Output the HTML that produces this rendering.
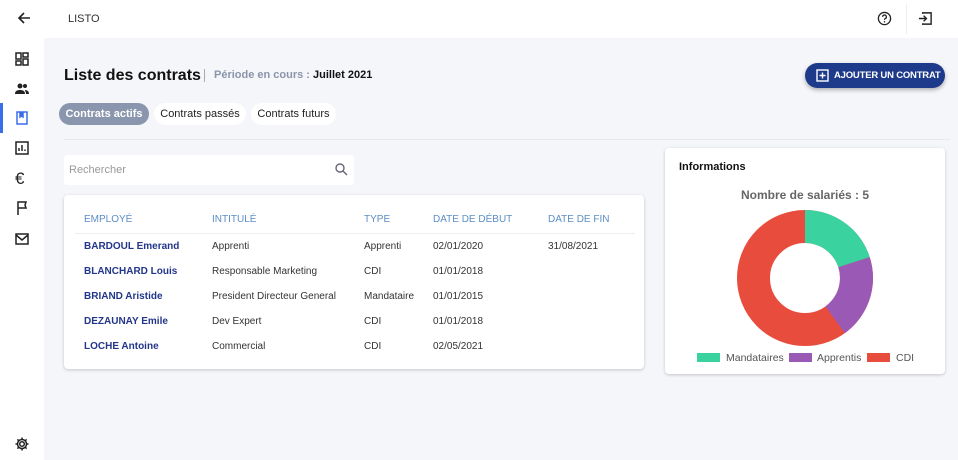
<!DOCTYPE html><html><head><style>
*{box-sizing:border-box;margin:0;padding:0}
body{width:958px;height:460px;overflow:hidden;background:#f5f6fa;font-family:"Liberation Sans",sans-serif;position:relative;color:#222}
.top{position:absolute;left:0;top:0;width:958px;height:38px;background:#fff}
.side{position:absolute;left:0;top:38px;width:44px;height:422px;background:#fff}
.abs{position:absolute;white-space:nowrap}
.ic{position:absolute;left:14px;width:16px;height:16px}
.card{position:absolute;background:#fff;border-radius:4px;box-shadow:0 1px 3px rgba(0,0,0,.2)}
.tab{position:absolute;top:103px;height:22px;border-radius:11px;background:#fff;font-size:11px;line-height:22px;text-align:center;color:#222;white-space:nowrap}
.row{position:absolute;font-size:10px;color:#333;white-space:nowrap}
.n{color:#22368a;font-weight:bold}
</style></head><body>
<div class="top"></div>
<div class="side"></div>
<svg class="abs" style="left:17px;top:11px" width="14" height="14" viewBox="0 0 14 14"><path d="M13 7H2M7 2L2 7l5 5" stroke="#222" stroke-width="1.6" fill="none"/></svg>
<div class="abs" style="left:68px;top:13px;font-size:11px;color:#333">LISTO</div>
<svg class="abs" style="left:877px;top:11px" width="15" height="15" viewBox="0 0 16 16"><circle cx="8" cy="8" r="6.5" stroke="#222" stroke-width="1.4" fill="none"/><path d="M6 6.3a2 2 0 1 1 2.6 1.9c-.5.2-.6.5-.6 1.2" stroke="#222" stroke-width="1.3" fill="none"/><circle cx="8" cy="11.4" r=".8" fill="#222"/></svg>
<div class="abs" style="left:906px;top:4px;width:1px;height:30px;background:#eee"></div>
<svg class="abs" style="left:918px;top:11px" width="15" height="15" viewBox="0 0 16 16"><path d="M5 3V2h9v12H5v-1" stroke="#222" stroke-width="1.5" fill="none"/><path d="M1 8h8M6 5l3 3-3 3" stroke="#222" stroke-width="1.5" fill="none"/></svg>
<svg class="ic" style="top:51px" viewBox="0 0 16 16" fill="none" stroke="#222" stroke-width="1.5"><rect x="2" y="2" width="5" height="6"/><rect x="9" y="2" width="5" height="4"/><rect x="2" y="10" width="5" height="4"/><rect x="9" y="8" width="5" height="6"/></svg>
<svg class="ic" style="top:81px" viewBox="0 0 16 16" fill="#222"><circle cx="6" cy="5" r="2.5"/><circle cx="11" cy="5" r="2"/><path d="M1 13c0-3 2-4 5-4s5 1 5 4zM11 9c2 0 4 1 4 4h-3c0-2-1-3-1-4z"/></svg>
<div class="abs" style="left:0;top:103px;width:3px;height:30px;background:#3a6ee8"></div>
<svg class="ic" style="top:110px" viewBox="0 0 16 16" fill="none" stroke="#3a6ee8" stroke-width="1.5"><rect x="3" y="2" width="10" height="12"/><path d="M6 2v5l1.5-1 1.5 1V2" fill="#3a6ee8"/></svg>
<svg class="ic" style="top:140px" viewBox="0 0 16 16" fill="none" stroke="#222" stroke-width="1.5"><rect x="2" y="2" width="12" height="12"/><path d="M5 11V8M8 11V5M11 11v-1.5"/></svg>
<div class="abs" style="left:15px;top:169px;font-size:17px;color:#222">€</div>
<svg class="ic" style="top:200px" viewBox="0 0 16 16" fill="none" stroke="#222" stroke-width="1.5"><path d="M4 15V2h8l-1 3 1 3H4"/></svg>
<svg class="ic" style="top:231px" viewBox="0 0 16 16" fill="none" stroke="#222" stroke-width="1.5"><rect x="2" y="3" width="12" height="10"/><path d="M2 4l6 5 6-5"/></svg>
<svg class="ic" style="top:436px" viewBox="0 0 16 16" fill="none" stroke="#222" stroke-width="1.5"><circle cx="8" cy="8" r="2.3"/><path d="M8 1.5v2M8 12.5v2M1.5 8h2M12.5 8h2M3.4 3.4l1.4 1.4M11.2 11.2l1.4 1.4M3.4 12.6l1.4-1.4M11.2 4.8l1.4-1.4"/><circle cx="8" cy="8" r="4.5"/></svg>
<div class="abs" style="left:64px;top:67px;font-size:16px;font-weight:bold;color:#111">Liste des contrats</div>
<div class="abs" style="left:204px;top:69px;width:1px;height:13px;background:#aaa"></div>
<div class="abs" style="left:214px;top:69px;font-size:11px;color:#8a95aa;font-weight:bold">Période en cours : <span style="color:#111">Juillet 2021</span></div>
<div class="abs" style="left:805px;top:63px;width:140px;height:25px;border-radius:13px;background:#1e3a8a;box-shadow:0 2px 4px rgba(0,0,0,.3);color:#fff;font-size:9.5px;font-weight:bold;line-height:25px;padding-left:29px;letter-spacing:-.2px">AJOUTER UN CONTRAT</div>
<svg class="abs" style="left:816px;top:69px" width="13" height="13" viewBox="0 0 13 13" fill="none" stroke="#fff" stroke-width="1.4"><rect x="1" y="1" width="11" height="11"/><path d="M6.5 3.5v6M3.5 6.5h6"/></svg>
<div class="tab" style="left:59px;width:90px;background:#8a96ad;color:#fff;font-weight:bold">Contrats actifs</div>
<div class="tab" style="left:154px;width:92px">Contrats passés</div>
<div class="tab" style="left:251px;width:85px">Contrats futurs</div>
<div class="abs" style="left:64px;top:139px;width:886px;height:1px;background:#e8e9ee"></div>
<div class="abs" style="left:64px;top:155px;width:290px;height:30px;background:#fff;border-radius:3px"></div>
<div class="abs" style="left:69px;top:164px;font-size:11px;color:#999">Rechercher</div>
<svg class="abs" style="left:335px;top:163px" width="13" height="13" viewBox="0 0 13 13" fill="none" stroke="#667" stroke-width="1.4"><circle cx="5" cy="5" r="4"/><path d="M8 8l4 4"/></svg>
<div class="card" style="left:64px;top:195px;width:580px;height:174px"></div>
<div class="row" style="left:84px;top:214px;color:#5b8ec4">EMPLOYÉ</div>
<div class="row" style="left:212px;top:214px;color:#5b8ec4">INTITULÉ</div>
<div class="row" style="left:364px;top:214px;color:#5b8ec4">TYPE</div>
<div class="row" style="left:433px;top:214px;color:#5b8ec4">DATE DE DÉBUT</div>
<div class="row" style="left:548px;top:214px;color:#5b8ec4">DATE DE FIN</div>
<div class="abs" style="left:75px;top:233px;width:560px;height:1px;background:#eceef2"></div>
<div class="row n" style="left:84px;top:241px">BARDOUL Emerand</div><div class="row" style="left:212px;top:241px">Apprenti</div><div class="row" style="left:364px;top:241px">Apprenti</div><div class="row" style="left:433px;top:241px">02/01/2020</div><div class="row" style="left:548px;top:241px">31/08/2021</div>
<div class="row n" style="left:84px;top:266px">BLANCHARD Louis</div><div class="row" style="left:212px;top:266px">Responsable Marketing</div><div class="row" style="left:364px;top:266px">CDI</div><div class="row" style="left:433px;top:266px">01/01/2018</div>
<div class="row n" style="left:84px;top:291px">BRIAND Aristide</div><div class="row" style="left:212px;top:291px">President Directeur General</div><div class="row" style="left:364px;top:291px">Mandataire</div><div class="row" style="left:433px;top:291px">01/01/2015</div>
<div class="row n" style="left:84px;top:316px">DEZAUNAY Emile</div><div class="row" style="left:212px;top:316px">Dev Expert</div><div class="row" style="left:364px;top:316px">CDI</div><div class="row" style="left:433px;top:316px">01/01/2018</div>
<div class="row n" style="left:84px;top:341px">LOCHE Antoine</div><div class="row" style="left:212px;top:341px">Commercial</div><div class="row" style="left:364px;top:341px">CDI</div><div class="row" style="left:433px;top:341px">02/05/2021</div>
<div class="card" style="left:665px;top:148px;width:280px;height:226px"></div>
<div class="abs" style="left:679px;top:161px;font-size:11px;font-weight:bold;color:#111">Informations</div>
<div class="abs" style="left:665px;top:188px;width:280px;text-align:center;font-size:12px;font-weight:bold;color:#666">Nombre de salariés : 5</div>
<svg class="abs" style="left:737px;top:210px" width="136" height="136" viewBox="0 0 136 136"><g transform="rotate(-90 68 68)" fill="none" stroke-width="33"><circle cx="68" cy="68" r="51.5" stroke="#e74c3c"/><circle cx="68" cy="68" r="51.5" stroke="#3ad29f" stroke-dasharray="64.7 400"/><circle cx="68" cy="68" r="51.5" stroke="#9b59b6" stroke-dasharray="0 64.7 64.7 400"/></g></svg>
<div class="abs" style="left:697px;top:353px;width:23px;height:9px;background:#3ad29f"></div><div class="abs" style="left:726px;top:352px;font-size:10.5px;color:#555">Mandataires</div>
<div class="abs" style="left:789px;top:353px;width:23px;height:9px;background:#9b59b6"></div><div class="abs" style="left:817px;top:352px;font-size:10.5px;color:#555">Apprentis</div>
<div class="abs" style="left:867px;top:353px;width:23px;height:9px;background:#e74c3c"></div><div class="abs" style="left:896px;top:352px;font-size:10.5px;color:#555">CDI</div>
</body></html>
